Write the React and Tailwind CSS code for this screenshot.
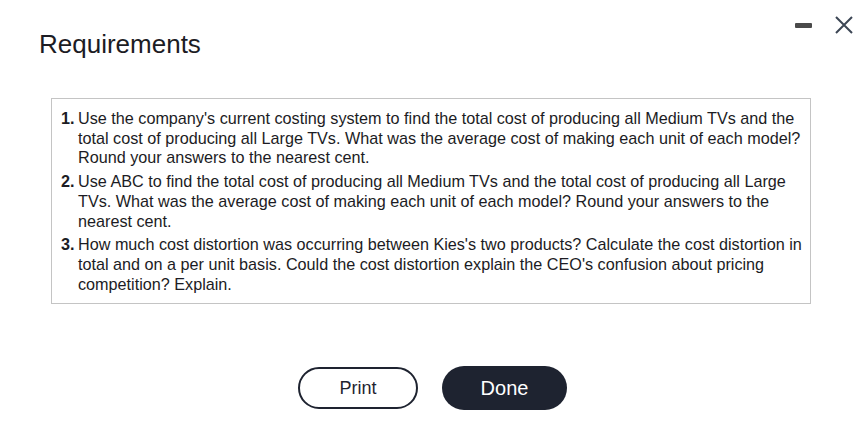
const items = [
  "Use the company's current costing system to find the total cost of producing all Medium TVs and the total cost of producing all Large TVs. What was the average cost of making each unit of each model? Round your answers to the nearest cent.",
  "Use ABC to find the total cost of producing all Medium TVs and the total cost of producing all Large TVs. What was the average cost of making each unit of each model? Round your answers to the nearest cent.",
  "How much cost distortion was occurring between Kies's two products? Calculate the cost distortion in total and on a per unit basis. Could the cost distortion explain the CEO's confusion about pricing competition? Explain.",
];

const App = () => {
  return (
    <div className="w-[858px] h-[433px] bg-white relative font-['Liberation_Sans',Arial,sans-serif] text-[#1c1c24]">
      <div className="absolute top-[15px] right-[4px] flex items-center gap-[22px]">
        <div className="w-[17px] h-[5px] bg-[#4a4a4a] rounded-[1px]" />
        <svg width="20" height="20" viewBox="0 0 20 20" className="text-[#3c4654]">
          <path d="M2 2 L18 18 M18 2 L2 18" stroke="currentColor" strokeWidth="2" fill="none" />
        </svg>
      </div>

      <div className="pt-[29px] pl-[39px]">
        <h1 className="text-[26px] leading-[30px]">Requirements</h1>
      </div>

      <div className="ml-[51px] mr-[47px] mt-[39px] border border-[#c4c4c4] pl-[9px] pr-[7px] pt-[10px] pb-[9px]">
        <ol className="flex flex-col gap-[4px]">
          {items.map((t, i) => (
            <li key={i} className="flex text-[16.2px] leading-[19.7px]">
              <span className="font-bold w-[17px] shrink-0">{i + 1}.</span>
              <span>{t}</span>
            </li>
          ))}
        </ol>
      </div>

      <div className="mt-[62px] flex justify-center items-center gap-[24px] pl-[7px]">
        <button className="w-[120px] h-[42px] rounded-full border-2 border-[#1e2330] text-[18px] text-[#1e2330] bg-white">
          Print
        </button>
        <button className="w-[125px] h-[44px] rounded-full bg-[#1e2330] text-[20px] text-white">
          Done
        </button>
      </div>
    </div>
  );
};

export default App;
